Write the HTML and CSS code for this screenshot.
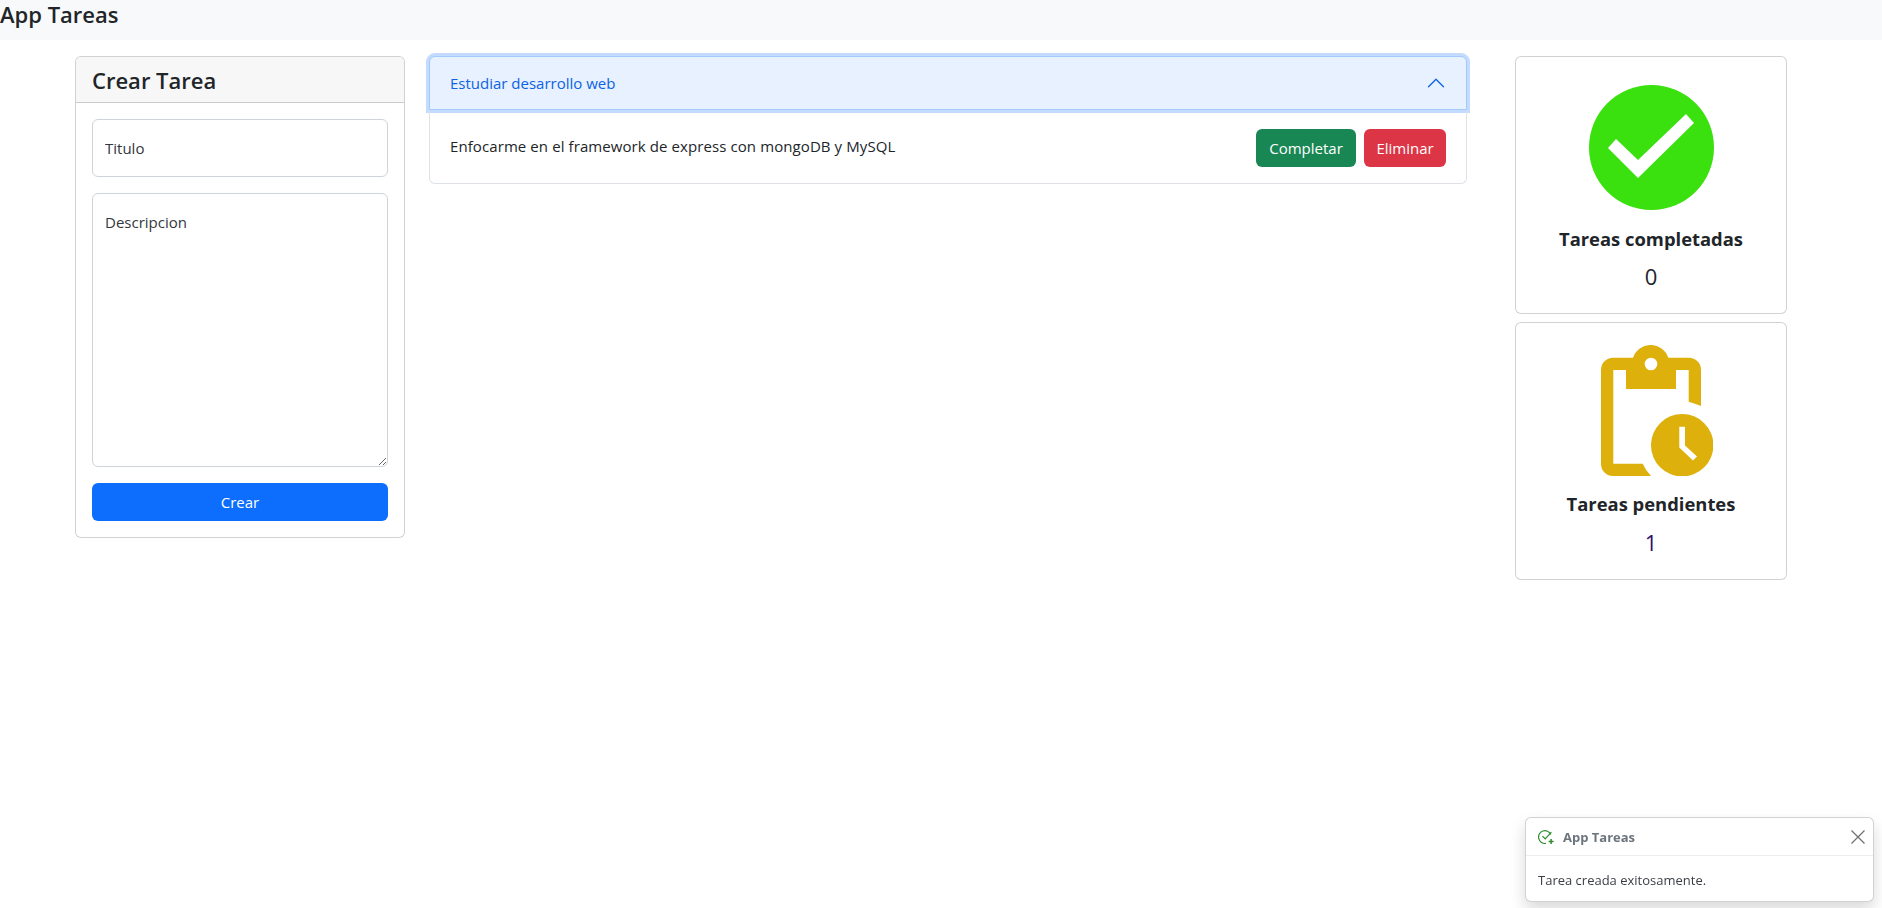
FILE: index.html
```html
<!DOCTYPE html>
<html lang="es">
<head>
<meta charset="utf-8">
<title>App Tareas</title>
<link rel="stylesheet" href="styles.css">
</head>
<body>
<nav class="navbar"><span class="brand">App Tareas</span></nav>
<main class="layout">
  <section class="card form-card">
    <h2 class="card-header">Crear Tarea</h2>
    <form class="card-body">
      <input class="field field-title" type="text" placeholder="Titulo">
      <textarea class="field field-desc" placeholder="Descripcion"></textarea>
      <button class="btn btn-primary btn-block" type="button">Crear</button>
    </form>
  </section>
  <section class="accordion">
    <div class="acc-header">
      <span>Estudiar desarrollo web</span>
      <svg class="chevron" viewBox="0 0 16 16" width="20" height="20"><path fill="currentColor" fill-rule="evenodd" d="M1.646 11.354a.5.5 0 0 0 .708 0L8 5.707l5.646 5.647a.5.5 0 0 0 .708-.708l-6-6a.5.5 0 0 0-.708 0l-6 6a.5.5 0 0 0 0 .708z"/></svg>
    </div>
    <div class="acc-body">
      <span class="acc-text">Enfocarme en el framework de express con mongoDB y MySQL</span>
      <div class="actions">
        <button class="btn btn-success" type="button">Completar</button>
        <button class="btn btn-danger" type="button">Eliminar</button>
      </div>
    </div>
  </section>
  <aside class="stats">
    <div class="card stat stat-done">
      <svg class="stat-icon" width="125" height="125" viewBox="0 0 125 125"><circle cx="62.5" cy="62.5" r="62.5" fill="#3be00f"/><polygon fill="#fff" points="19,63 27,54 49,75 97,29 105,38 49,93"/></svg>
      <h5 class="stat-title">Tareas completadas</h5>
      <p class="stat-value">0</p>
    </div>
    <div class="card stat stat-pending">
      <svg class="stat-icon" width="124" height="131" viewBox="-12 0 124 131"><path fill="#deb00b" fill-rule="evenodd" d="M12 12.7H32A18.6 18.6 0 0 1 67.3 12.7H88A12 12 0 0 1 100 24.7V61Q94 58.5 87.7 56.7V25H75V44H25V25H12.3V118.7H41.7Q45 126 50 131H12A12 12 0 0 1 0 119V24.7A12 12 0 0 1 12 12.7ZM50 12.7A6.3 6.3 0 1 0 50 25.3A6.3 6.3 0 1 0 50 12.7Z"/><path fill="#deb00b" fill-rule="evenodd" d="M81.2 69A31.2 31.2 0 1 0 81.2 131.4A31.2 31.2 0 1 0 81.2 69ZM78.3 81.7H84V100.5L96 111.5L92 115.5L78.3 102.5Z"/></svg>
      <h5 class="stat-title">Tareas pendientes</h5>
      <p class="stat-value">1</p>
    </div>
  </aside>
</main>
<div class="toast">
  <div class="toast-header">
    <svg class="toast-icon" width="16" height="16" viewBox="0 0 16 16" fill="none" stroke="#2e8b2e" stroke-width="1.2"><path d="M12.8 5.4A6.4 6.4 0 1 0 8 14.4"/><path d="M4.4 7.2L7.2 10L13.4 3.2"/><path d="M10.6 12.6h5M13.1 10.1v5" stroke-width="1.5"/></svg>
    <strong class="toast-title">App Tareas</strong>
    <svg class="toast-close" width="14" height="14" viewBox="0 0 14 14" stroke="#6f6f6f" stroke-width="1.2"><path d="M0.5 0.5L13.5 13.5M13.5 0.5L0.5 13.5"/></svg>
  </div>
  <div class="toast-body">Tarea creada exitosamente.</div>
</div>
</body>
</html>
```
FILE: styles.css
```css
* { box-sizing: border-box; }
html, body { height: 100%; }
body {
  margin: 0;
  font-family: "Open Sans", "Noto Sans", sans-serif;
  font-size: 15px;
  color: #212529;
  background: #fff;
  overflow: hidden;
}
.navbar {
  height: 40px;
  background: #f8f9fa;
  display: flex;
  align-items: flex-start;
}
.brand { font-size: 22px; line-height: 28px; font-weight: 600; }
.layout {
  display: flex;
  align-items: flex-start;
  padding: 16px 0 0 75px;
}
.card {
  background: #fff;
  border: 1px solid rgba(0,0,0,.175);
  border-radius: 6px;
}
.form-card { width: 330px; flex: none; }
.card-header {
  margin: 0;
  height: 46px;
  padding: 0 16px;
  background: #f7f7f7;
  border-bottom: 1px solid rgba(0,0,0,.175);
  border-radius: 5px 5px 0 0;
  font-size: 22px;
  line-height: 47px;
  font-weight: 600;
}
.card-body {
  display: flex;
  flex-direction: column;
  padding: 16px;
  gap: 16px;
}
.field {
  display: block;
  width: 100%;
  border: 1px solid #ced4da;
  border-radius: 6px;
  font: inherit;
  color: #212529;
  padding: 0 12px;
  background: #fff;
  outline: none;
}
.field::placeholder { color: #33373c; opacity: 1; }
.field-title { height: 58px; }
.field-desc { height: 274px; padding-top: 16px; line-height: 24px; resize: vertical; }
.btn {
  height: 38px;
  border: 0;
  border-radius: 6px;
  font: inherit;
  color: #fff;
  padding: 0 12px;
  cursor: pointer;
}
.btn-primary { background: #0d6efd; }
.btn-success { background: #198754; width: 100px; }
.btn-danger { background: #dc3545; width: 82px; }
.btn-block { width: 100%; }
.accordion { width: 1038px; flex: none; margin: 0 48px 0 24px; }
.acc-header {
  height: 54px;
  padding: 0 20px 0 20px;
  display: flex;
  align-items: center;
  justify-content: space-between;
  color: #0c63e4;
  background: #e7f1ff;
  border: 1px solid #a5c8fd;
  border-radius: 6px 6px 0 0;
  box-shadow: 0 0 0 3px rgba(13,110,253,.25);
}
.acc-body {
  height: 74px;
  padding: 2px 20px 0 20px;
  display: flex;
  align-items: center;
  justify-content: space-between;
  border: 1px solid #dee2e6;
  border-top: 0;
  border-radius: 0 0 6px 6px;
}
.acc-text { margin-bottom: 4px; letter-spacing: .09px; }
.actions { display: flex; gap: 8px; }
.stats { width: 272px; flex: none; display: flex; flex-direction: column; gap: 8px; }
.stat {
  height: 258px;
  display: flex;
  flex-direction: column;
  align-items: center;
}
.stat-done { padding-top: 28px; }
.stat-pending { padding-top: 22px; }
.stat-icon { display: block; flex: none; }
.stat-title { margin: 0; font-size: 18.4px; line-height: 24px; font-weight: 700; }
.stat-done .stat-title { margin-top: 17px; }
.stat-pending .stat-title { margin-top: 16px; }
.stat-value { margin: 10px 0 0; font-size: 22px; line-height: 30px; }
.stat-pending .stat-value { color: #2c0f6b; margin-top: 11px; }
.toast {
  position: fixed;
  left: 1525px;
  top: 817px;
  width: 349px;
  height: 85px;
  background: #fff;
  border: 1px solid rgba(0,0,0,.175);
  border-radius: 6px;
  box-shadow: 0 8px 16px rgba(0,0,0,.15);
}
.toast-header {
  height: 38px;
  display: flex;
  align-items: center;
  padding: 0 8px 0 12px;
  border-bottom: 1px solid rgba(0,0,0,.07);
  color: #6c757d;
  font-size: 13px;
}
.toast-icon { margin-right: 9px; }
.toast-title { flex: 1; font-weight: 700; }
.toast-body { padding: 14px 12px 0; font-size: 13px; line-height: 20px; color: #3b3f44; }
```
